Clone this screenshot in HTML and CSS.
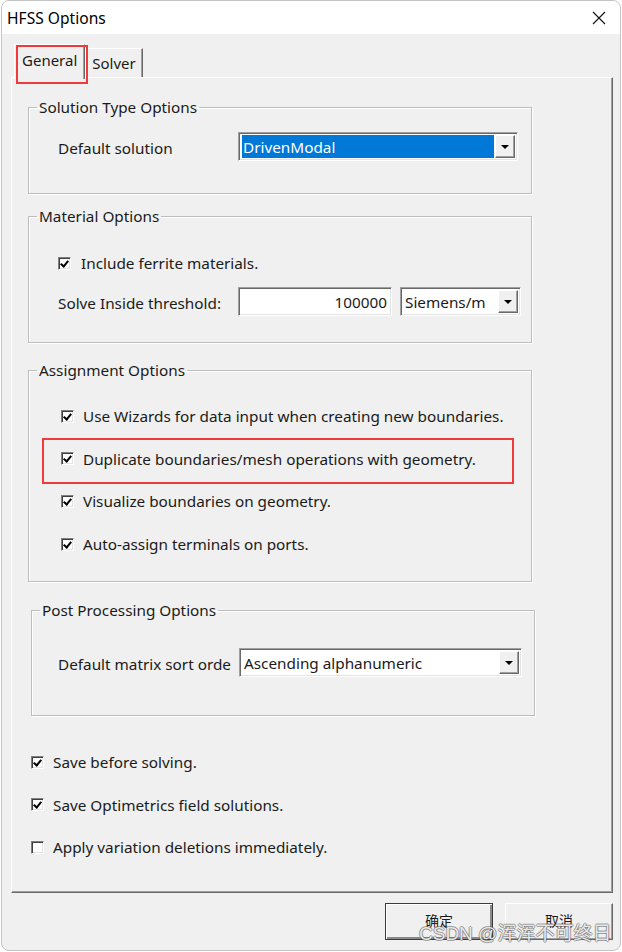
FILE: index.html
```html
<!DOCTYPE html>
<html>
<head>
<meta charset="utf-8">
<link rel="stylesheet" href="styles.css">
</head>
<body>
<div class="window">
  <div class="titlebar">
    <span class="title">HFSS Options</span>
    <svg class="close" width="14" height="14" viewBox="0 0 14 14"><path d="M1 1L13 13M13 1L1 13" stroke="#111" stroke-width="1.1" fill="none"/></svg>
  </div>
  <div class="client">
    <div class="tabs">
      <div class="tab active"><span>General</span></div>
      <div class="tab">Solver</div>
    </div>
    <div class="panel">
      <fieldset class="group g1">
        <legend>Solution Type Options</legend>
        <div class="inner">
          <div class="row">
            <span class="label w180">Default solution</span>
            <div class="combo c1">
              <div class="combo-field"><span class="sel">DrivenModal</span></div>
              <div class="combo-btn"><span class="tri"></span></div>
            </div>
          </div>
        </div>
      </fieldset>

      <fieldset class="group g2">
        <legend>Material Options</legend>
        <div class="inner">
          <div class="check"><span class="box on"></span><span>Include ferrite materials.</span></div>
          <div class="row r2">
            <span class="label w180">Solve Inside threshold:</span>
            <div class="textbox">100000</div>
            <div class="combo c2">
              <div class="combo-field"><span class="val">Siemens/m</span></div>
              <div class="combo-btn"><span class="tri"></span></div>
            </div>
          </div>
        </div>
      </fieldset>

      <fieldset class="group g3">
        <legend>Assignment Options</legend>
        <div class="inner">
          <div class="check"><span class="box on"></span><span>Use Wizards for data input when creating new boundaries.</span></div>
          <div class="check mark"><span class="box on"></span><span>Duplicate boundaries/mesh operations with geometry.</span></div>
          <div class="check"><span class="box on"></span><span>Visualize boundaries on geometry.</span></div>
          <div class="check"><span class="box on"></span><span>Auto-assign terminals on ports.</span></div>
        </div>
      </fieldset>

      <fieldset class="group g4">
        <legend>Post Processing Options</legend>
        <div class="inner">
          <div class="row">
            <span class="label w180b">Default matrix sort orde</span>
            <div class="combo c3">
              <div class="combo-field"><span class="val">Ascending alphanumeric</span></div>
              <div class="combo-btn"><span class="tri"></span></div>
            </div>
          </div>
        </div>
      </fieldset>

      <div class="bottom-checks">
        <div class="check"><span class="box on"></span><span>Save before solving.</span></div>
        <div class="check"><span class="box on"></span><span>Save Optimetrics field solutions.</span></div>
        <div class="check"><span class="box"></span><span>Apply variation deletions immediately.</span></div>
      </div>
    </div>
    <div class="buttons">
      <div class="btn default">确定</div>
      <div class="btn">取消</div>
    </div>
    <div class="watermark">CSDN @浑浑不可终日</div>
  </div>
</div>
</body>
</html>
```

FILE: styles.css
```css
* { box-sizing: border-box; }
html, body { margin: 0; padding: 0; background: #ffffff; }
body {
  font-family: "Noto Sans", "Noto Sans CJK SC", sans-serif;
  font-size: 15.3px;
  color: #1a1a1a;
}
.window {
  width: 620px;
  height: 951px;
  margin-left: 1px;
  border: 1px solid #c4c4c4;
  border-radius: 8px;
  background: #f0f0f0;
  overflow: hidden;
  position: relative;
}
.titlebar {
  height: 33px;
  background: #ffffff;
  display: flex;
  align-items: center;
  justify-content: space-between;
  padding: 0 14px 0 5px;
}
.title { font-size: 15.6px; color: #000; }
.close { display: block; margin-top: 1px; }

.client { padding: 0 0 0 9px; position: relative; }
.tabs {
  display: flex;
  align-items: flex-end;
  height: 43px;
  padding-left: 3px;
  position: relative;
  z-index: 2;
}
.tab {
  height: 29px;
  padding: 0 6px;
  display: flex;
  align-items: center;
  border-top: 1px solid #ffffff;
  border-left: 1px solid #ffffff;
  border-right: 1px solid #696969;
  box-shadow: inset -1px 0 0 #a0a0a0;
  background: #f0f0f0;
  font-size: 15px;
}
.tab.active {
  height: 35px;
  margin-bottom: -2px;
  padding: 0 7px 4px 7px;
  position: relative;
}
.tab.active span { position: relative; }
.tab.active::after {
  content: "";
  position: absolute;
  left: 1px;
  top: 0;
  width: 68px;
  height: 35px;
  border: 2px solid #ef3b3b;
}

.panel {
  width: 602px;
  height: 816px;
  border-top: 1px solid #ffffff;
  border-left: 1px solid #ffffff;
  border-right: 1px solid #696969;
  border-bottom: 1px solid #696969;
  box-shadow: inset -1px -1px 0 #a0a0a0;
  padding: 20px 0 0 16px;
  position: relative;
  z-index: 1;
}

.group {
  margin: 0;
  width: 504px;
  border: 1px solid #bdbdbd;
  box-shadow: 1px 1px 0 #ffffff, inset 1px 1px 0 #ffffff;
  padding: 0;
}
.group legend {
  margin-left: 8px;
  padding: 0 2px;
  line-height: 18px;
  height: 18px;
}
.inner { padding-left: 29px; }
.g1 .inner { padding-top: 16px; padding-bottom: 32px; }
.g2 { margin-top: 13px; }
.g2 .inner { padding-top: 28px; padding-bottom: 26px; }
.g3 { margin-top: 18px; }
.g3 .inner { padding-top: 27px; padding-bottom: 27px; padding-left: 32px; }
.g4 { margin-top: 19px; margin-left: 3px; }
.g4 .inner { padding-top: 29px; padding-bottom: 38px; padding-left: 26px; }

.row { display: flex; align-items: center; height: 29px; }
.r2 { margin-top: 14px; }
.label { padding-top: 3px; }
.w180 { width: 180px; }
.w180b { width: 181px; white-space: nowrap; overflow: hidden; }

.check {
  display: flex;
  align-items: center;
  height: 20px;
  gap: 10px;
  white-space: nowrap;
}
.g3 .check + .check { margin-top: 22.7px; }
.g3 .check { gap: 9px; }
.check.mark { position: relative; }
.check.mark::after {
  content: "";
  position: absolute;
  left: -19px;
  top: -11px;
  width: 468px;
  height: 42px;
  border: 2px solid #ef3b3b;
}

.box {
  width: 13px;
  height: 13px;
  flex: none;
  background: #ffffff;
  border-top: 1px solid #808080;
  border-left: 1px solid #808080;
  border-right: 1px solid #ffffff;
  border-bottom: 1px solid #ffffff;
  box-shadow: inset 1px 1px 0 #404040, inset -1px -1px 0 #e3e3e3;
  position: relative;
}
.box.on::after {
  content: "";
  position: absolute;
  left: 3px;
  top: 1px;
  width: 3px;
  height: 6px;
  border-right: 2px solid #000;
  border-bottom: 2px solid #000;
  transform: rotate(40deg);
}

.combo {
  height: 29px;
  display: flex;
  border-top: 1px solid #a0a0a0;
  border-left: 1px solid #a0a0a0;
  border-right: 1px solid #ffffff;
  border-bottom: 1px solid #ffffff;
  box-shadow: inset 1px 1px 0 #696969, inset -1px -1px 0 #e3e3e3;
  background: #ffffff;
  padding: 2px;
}
.combo-field {
  flex: 1;
  display: flex;
  align-items: center;
  padding-left: 1px;
  white-space: nowrap;
}
.combo-field .val { padding-left: 1px; }
.sel {
  display: flex;
  align-items: center;
  width: 100%;
  height: 100%;
  background: #0078d7;
  color: #ffffff;
  padding-left: 1px;
}
.combo-btn {
  width: 20px;
  flex: none;
  background: #f0f0f0;
  border-top: 1px solid #ffffff;
  border-left: 1px solid #ffffff;
  border-right: 1px solid #696969;
  border-bottom: 1px solid #696969;
  box-shadow: inset -1px -1px 0 #a0a0a0;
  display: flex;
  align-items: center;
  justify-content: center;
}
.tri {
  width: 0; height: 0;
  border-left: 4px solid transparent;
  border-right: 4px solid transparent;
  border-top: 4px solid #000;
}
.c1 { width: 280px; }
.c1 .combo-field { padding-right: 1px; }
.c2 { width: 121px; margin-left: 8px; }
.c3 { width: 283px; }

.textbox {
  width: 154px;
  height: 29px;
  background: #ffffff;
  border-top: 1px solid #a0a0a0;
  border-left: 1px solid #a0a0a0;
  border-right: 1px solid #ffffff;
  border-bottom: 1px solid #ffffff;
  box-shadow: inset 1px 1px 0 #696969, inset -1px -1px 0 #e3e3e3;
  display: flex;
  align-items: center;
  justify-content: flex-end;
  padding-right: 4px;
}

.bottom-checks { margin-top: 36px; padding-left: 3px; }
.bottom-checks .check { gap: 9px; }
.bottom-checks .check + .check { margin-top: 22.5px; }

.buttons {
  display: flex;
  gap: 12px;
  padding-left: 374px;
  margin-top: 10px;
}
.btn {
  width: 108px;
  height: 37px;
  display: flex;
  align-items: center;
  justify-content: center;
  padding-bottom: 4px;
  font-family: "Noto Sans CJK SC", sans-serif;
  font-size: 14px;
  border-top: 1px solid #ffffff;
  border-left: 1px solid #ffffff;
  border-right: 1px solid #696969;
  border-bottom: 1px solid #696969;
  box-shadow: inset -1px -1px 0 #a0a0a0;
  background: #f0f0f0;
}
.btn.default {
  border: 1px solid #3a3a3a;
  box-shadow: inset 1px 1px 0 #ffffff, inset -2px -2px 0 #8a8a8a;
}

.watermark {
  position: absolute;
  left: 417px;
  top: 884px;
  font-family: "Liberation Sans", "Noto Sans CJK SC", sans-serif;
  font-size: 19px;
  color: rgba(250, 250, 250, 0.9);
  text-shadow: 1px 0 0 rgba(90,90,90,0.55), -1px 0 0 rgba(90,90,90,0.55), 0 1px 0 rgba(90,90,90,0.55), 0 -1px 0 rgba(90,90,90,0.55);
  white-space: nowrap;
  pointer-events: none;
}
```
